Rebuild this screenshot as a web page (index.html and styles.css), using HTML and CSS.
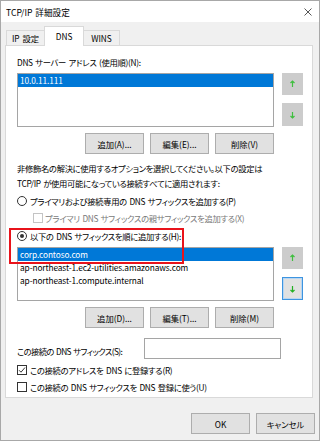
FILE: index.html
```html
<!DOCTYPE html>
<html lang="ja">
<head>
<meta charset="UTF-8">
<meta name="viewport" content="width=device-width, initial-scale=1.0">
<title>TCP/IP 詳細設定</title>
<link rel="stylesheet" href="styles.css">
</head>
<body>

<div class="window">
    <div class="titlebar">
        <span class="title">TCP/IP 詳細設定</span>
        <svg class="close" width="8" height="8" viewBox="0 0 8 8"><path d="M0.5 0.5 L7.5 7.5 M7.5 0.5 L0.5 7.5" stroke="#444" stroke-width="0.9" fill="none"/></svg>
    </div>

    <div class="client">
        <div class="tabs">
            <div class="tab tab-ip">IP 設定</div>
            <div class="tab tab-dns active">DNS</div>
            <div class="tab tab-wins">WINS</div>
        </div>

        <div class="panel">
            <div class="label">DNS サーバー アドレス (使用順)(N):</div>
            <div class="list-row">
                <div class="listbox">
                    <div class="item selected">10.0.11.111</div>
                </div>
                <div class="arrows">
                    <button class="arrow">
                        <svg width="7" height="8" viewBox="0 0 7 8"><path d="M3.5 1 V7 M1.5 3 L3.5 1 L5.5 3" stroke="#3fbf3f" stroke-width="1.2" fill="none"/></svg>
                    </button>
                    <button class="arrow down">
                        <svg width="7" height="8" viewBox="0 0 7 8"><path d="M3.5 1 V7 M1.5 5 L3.5 7 L5.5 5" stroke="#3fbf3f" stroke-width="1.2" fill="none"/></svg>
                    </button>
                </div>
            </div>
            <div class="btn-row">
                <button class="btn">追加(A)...</button>
                <button class="btn">編集(E)...</button>
                <button class="btn">削除(V)</button>
            </div>

            <p class="note">非修飾名の解決に使用するオプションを選択してください。以下の設定は<br>TCP/IP が使用可能になっている接続すべてに適用されます:</p>

            <div class="option first">
                <span class="radio"></span>プライマリおよび接続専用の DNS サフィックスを追加する(P)
            </div>
            <div class="option sub disabled">
                <span class="check"></span>プライマリ DNS サフィックスの親サフィックスを追加する(X)
            </div>
            <div class="option gap">
                <span class="radio on"></span>以下の DNS サフィックスを順に追加する(H):
            </div>

            <div class="list-row">
                <div class="listbox">
                    <div class="item selected">corp.contoso.com</div>
                    <div class="item">ap-northeast-1.ec2-utilities.amazonaws.com</div>
                    <div class="item">ap-northeast-1.compute.internal</div>
                </div>
                <div class="arrows">
                    <button class="arrow">
                        <svg width="7" height="8" viewBox="0 0 7 8"><path d="M3.5 1 V7 M1.5 3 L3.5 1 L5.5 3" stroke="#3fbf3f" stroke-width="1.2" fill="none"/></svg>
                    </button>
                    <button class="arrow down focused">
                        <svg width="7" height="8" viewBox="0 0 7 8"><path d="M3.5 1 V7 M1.5 5 L3.5 7 L5.5 5" stroke="#22b022" stroke-width="1.2" fill="none"/></svg>
                    </button>
                </div>
            </div>
            <div class="btn-row">
                <button class="btn">追加(D)...</button>
                <button class="btn">編集(T)...</button>
                <button class="btn">削除(M)</button>
            </div>

            <div class="suffix-row">
                <span>この接続の DNS サフィックス(S):</span>
                <input type="text" class="textbox">
            </div>

            <div class="option gap">
                <span class="check on">
                    <svg width="8" height="8" viewBox="0 0 8 8"><path d="M1 4.2 L3 6.2 L7 1.5" stroke="#222" stroke-width="0.9" fill="none"/></svg>
                </span>この接続のアドレスを DNS に登録する(R)
            </div>
            <div class="option">
                <span class="check"></span>この接続の DNS サフィックスを DNS 登録に使う(U)
            </div>

            <div class="highlight"></div>
        </div>

        <div class="footer">
            <button class="btn">OK</button>
            <button class="btn">キャンセル</button>
        </div>
    </div>
</div>

</body>
</html>
```

FILE: styles.css
```css
body {
    margin: 0;
    font-family: "Noto Sans CJK JP", sans-serif;
    font-size: 8.3px;
    letter-spacing: -0.3px;
    word-spacing: 1px;
    font-feature-settings: "palt" 1;
    color: #000;
    background-color: #fff;
}
.window {
    width: 320px;
    height: 441px;
    border: 1px solid #a8a8a8;
    box-sizing: border-box;
    display: flex;
    flex-direction: column;
}
.titlebar {
    height: 21px;
    background-color: #fff;
    display: flex;
    align-items: center;
    justify-content: space-between;
    padding: 0 7px 0 5px;
}
.title {
    font-size: 8.6px;
    letter-spacing: 0;
}
.client {
    flex: 1;
    background-color: #f0f0f0;
    padding: 4px 5px 0 4px;
}

/* tabs */
.tabs {
    display: flex;
    align-items: flex-end;
    height: 19px;
    padding-left: 1px;
}
.tab {
    height: 15px;
    line-height: 15px;
    text-align: center;
    border: 1px solid #d9d9d9;
    border-bottom: none;
    box-sizing: border-box;
    background-color: #f0f0f0;
    letter-spacing: 0;
}
.tab-ip {
    width: 39px;
}
.tab-dns {
    width: 40px;
    margin-left: -1px;
}
.tab-wins {
    width: 37px;
    margin-left: -1px;
}
.tab.active {
    height: 20px;
    line-height: 18px;
    background-color: #fff;
    margin-bottom: -1px;
    position: relative;
    z-index: 1;
}

/* panel */
.panel {
    position: relative;
    width: 308px;
    height: 353px;
    box-sizing: border-box;
    background-color: #fff;
    border: 1px solid #d9d9d9;
    padding: 10px 0 0 11px;
}
.label {
    height: 13px;
    line-height: 13px;
}
.list-row {
    display: flex;
    margin-top: 4px;
}
.listbox {
    width: 257px;
    height: 54px;
    box-sizing: border-box;
    border: 1px solid #a5a5a5;
    overflow: hidden;
}
.item {
    height: 13px;
    line-height: 13px;
    padding-left: 2px;
    white-space: nowrap;
    letter-spacing: -0.1px;
}
.item.selected {
    background-color: #0078d7;
    color: #fff;
}
.arrows {
    margin-left: 8px;
    display: flex;
    flex-direction: column;
    gap: 8px;
}
.arrow {
    width: 21px;
    height: 22px;
    padding: 0;
    border: 1px solid #cccccc;
    background-color: #cccccc;
    display: flex;
    align-items: center;
    justify-content: center;
}
.arrow.down {
    height: 23px;
}
.arrow.focused {
    border-color: #3d94e0;
    background-color: #e1e1e1;
    box-shadow: inset 0 0 0 1px #b8d6f2;
}
.btn-row {
    display: flex;
    gap: 6px;
    margin-top: 6px;
    padding-left: 68px;
}
.btn {
    width: 59px;
    height: 21px;
    padding: 0;
    font-family: inherit;
    font-size: inherit;
    font-feature-settings: inherit;
    letter-spacing: 0;
    color: #000;
    background-color: #e1e1e1;
    border: 1px solid #adadad;
}
.note {
    margin: 7px 0 0;
    line-height: 15px;
}

/* radio and check options */
.option {
    display: flex;
    align-items: center;
    height: 14px;
    margin-top: 3px;
    white-space: nowrap;
}
.option.gap {
    margin-top: 4px;
}
.option.sub {
    padding-left: 16px;
}
.option.disabled {
    color: #7a7a7a;
}
.radio,
.check {
    width: 10px;
    height: 10px;
    box-sizing: border-box;
    border: 1px solid #333;
    margin-right: 3px;
    flex: none;
    display: flex;
    align-items: center;
    justify-content: center;
}
.radio {
    border-radius: 50%;
}
.radio.on::after {
    content: "";
    width: 4px;
    height: 4px;
    border-radius: 50%;
    background-color: #333;
}
.disabled .check {
    border-color: #c4c4c4;
    margin-right: 2px;
}
.option.gap + .list-row {
    margin-top: 4px;
}

.suffix-row {
    display: flex;
    align-items: center;
    justify-content: space-between;
    width: 264px;
    margin-top: 10px;
}
.suffix-row span {
    padding-top: 5px;
    letter-spacing: -0.6px;
}
.textbox {
    width: 137px;
    height: 21px;
    box-sizing: border-box;
    border: 1px solid #a5a5a5;
    margin: 0;
    outline: none;
}

/* red annotation box */
.highlight {
    position: absolute;
    left: 3px;
    top: 182px;
    width: 175px;
    height: 36px;
    box-sizing: border-box;
    border: 2px solid #e8131b;
}

.footer {
    display: flex;
    justify-content: flex-end;
    gap: 6px;
    margin-top: 15px;
    margin-right: -1px;
}
```
